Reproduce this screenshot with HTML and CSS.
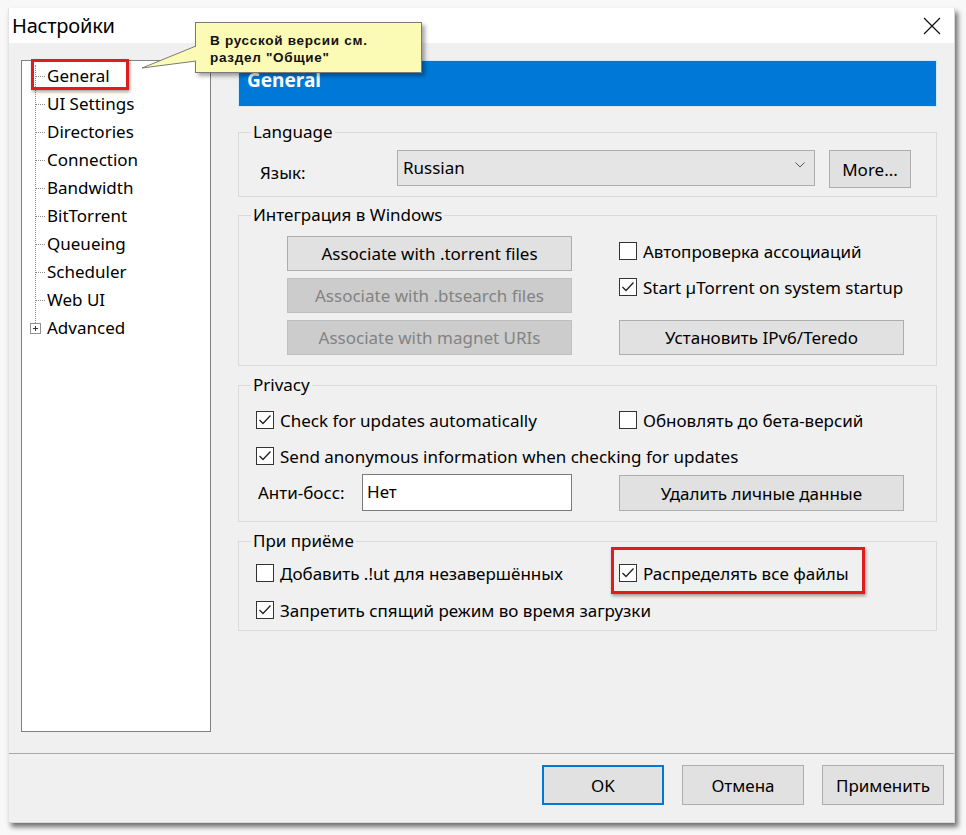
FILE: index.html
```html
<!DOCTYPE html>
<html lang="ru">
<head>
<meta charset="utf-8">
<title>Настройки</title>
<link rel="stylesheet" href="styles.css">
</head>
<body>
<div class="window">
  <div class="titlebar">
    <span class="title">Настройки</span>
    <svg class="close" width="18" height="18" viewBox="0 0 18 18"><path d="M1 1 L17 17 M17 1 L1 17" stroke="#111" stroke-width="1.2" fill="none"/></svg>
  </div>
  <div class="main">
    <div class="tree">
      <ul class="tree-list">
        <li>General</li>
        <li>UI Settings</li>
        <li>Directories</li>
        <li>Connection</li>
        <li>Bandwidth</li>
        <li>BitTorrent</li>
        <li>Queueing</li>
        <li>Scheduler</li>
        <li>Web UI</li>
        <li class="has-children"><span class="expander"><svg width="11" height="11" viewBox="0 0 11 11"><rect x="0.5" y="0.5" width="10" height="10" fill="#fff" stroke="#919191"/><path d="M3 5.5 H8 M5.5 3 V8" stroke="#333" stroke-width="1"/></svg></span>Advanced</li>
      </ul>
    </div>
    <div class="panel">
      <div class="header">General</div>

      <fieldset class="group g-lang">
        <legend>Language</legend>
        <div class="lang-row">
          <span class="lang-label">Язык:</span>
          <div class="combo"><span>Russian</span><svg width="10" height="6" viewBox="0 0 10 6"><polyline points="0.5,0.5 5,5 9.5,0.5" stroke="#555" stroke-width="1" fill="none"/></svg></div>
          <button class="btn btn-more">More...</button>
        </div>
      </fieldset>

      <fieldset class="group g-int">
        <legend>Интеграция в Windows</legend>
        <div class="int-grid">
          <div class="int-left">
            <button class="btn btn-wide">Associate with .torrent files</button>
            <button class="btn btn-wide disabled">Associate with .btsearch files</button>
            <button class="btn btn-wide disabled">Associate with magnet URIs</button>
          </div>
          <div class="int-right">
            <label class="check"><span class="cb"></span>Автопроверка ассоциаций</label>
            <label class="check check-2"><span class="cb on"><svg width="16" height="16" viewBox="0 0 16 16"><polyline points="2.5,8 6,11.5 13.5,3.5" stroke="#222" stroke-width="1.3" fill="none"/></svg></span>Start µTorrent on system startup</label>
            <button class="btn btn-wide btn-ipv6">Установить IPv6/Teredo</button>
          </div>
        </div>
      </fieldset>

      <fieldset class="group g-priv">
        <legend>Privacy</legend>
        <div class="two-col row-first">
          <label class="check"><span class="cb on"><svg width="16" height="16" viewBox="0 0 16 16"><polyline points="2.5,8 6,11.5 13.5,3.5" stroke="#222" stroke-width="1.3" fill="none"/></svg></span>Check for updates automatically</label>
          <label class="check"><span class="cb"></span>Обновлять до бета-версий</label>
        </div>
        <div class="two-col row-next">
          <label class="check"><span class="cb on"><svg width="16" height="16" viewBox="0 0 16 16"><polyline points="2.5,8 6,11.5 13.5,3.5" stroke="#222" stroke-width="1.3" fill="none"/></svg></span>Send anonymous information when checking for updates</label>
        </div>
        <div class="boss-row">
          <span class="boss-label">Анти-босс:</span>
          <div class="input">Нет</div>
          <button class="btn btn-wide btn-clear">Удалить личные данные</button>
        </div>
      </fieldset>

      <fieldset class="group g-recv">
        <legend>При приёме</legend>
        <div class="two-col row-first-r">
          <label class="check"><span class="cb"></span>Добавить .!ut для незавершённых</label>
          <label class="check"><span class="cb on"><svg width="16" height="16" viewBox="0 0 16 16"><polyline points="2.5,8 6,11.5 13.5,3.5" stroke="#222" stroke-width="1.3" fill="none"/></svg></span>Распределять все файлы</label>
        </div>
        <div class="two-col row-next-r">
          <label class="check"><span class="cb on"><svg width="16" height="16" viewBox="0 0 16 16"><polyline points="2.5,8 6,11.5 13.5,3.5" stroke="#222" stroke-width="1.3" fill="none"/></svg></span>Запретить спящий режим во время загрузки</label>
        </div>
      </fieldset>
    </div>
  </div>
  <div class="footer">
    <button class="btn btn-foot btn-ok">OK</button>
    <button class="btn btn-foot">Отмена</button>
    <button class="btn btn-foot">Применить</button>
  </div>

  <div class="mark mark-general"></div>
  <div class="mark mark-alloc"></div>
  <div class="callout">В русской версии см.<br>раздел "Общие"</div>
  <svg class="callout-tail" width="62" height="36" viewBox="0 0 62 36"><polygon points="59,8 4,30 59,23" fill="#fbfbb6"/><polyline points="58,8 4,30 58,23" stroke="#7a7a7a" stroke-width="1" fill="none"/></svg>
</div>
</body>
</html>
```
FILE: styles.css
```css
* { box-sizing: border-box; }
html, body { margin: 0; padding: 0; }
body {
  background: #f8f8f8;
  font-family: "Noto Sans", "Open Sans", sans-serif;
  font-size: 17px;
  color: #000;
  width: 966px;
  height: 835px;
  overflow: hidden;
}
.window {
  position: relative;
  margin: 8px 0 0 8px;
  width: 947px;
  height: 815px;
  background: #f0f0f0;
  box-shadow: 3px 4px 5px rgba(0,0,0,0.55);
  border: 1px solid #d8d8d8;
  border-top: none;
  border-left-color: #e4e4e4;
}
.titlebar {
  height: 35px;
  background: #fff;
  display: flex;
  align-items: center;
  justify-content: space-between;
  padding: 0 13px 0 3px;
}
.title { font-size: 20px; line-height: 26px; margin-top: 1px; letter-spacing: -0.2px; }
.close { display: block; margin-top: 0; }

.main {
  height: 710px;
  display: flex;
  padding: 17px 0 0 12px;
  gap: 27px;
}
.tree {
  width: 190px;
  height: 672px;
  background: #fff;
  border: 1px solid #828282;
}
.tree-list {
  list-style: none;
  margin: 0;
  padding: 1px 0 0 0;
  position: relative;
}
.tree-list::before {
  content: "";
  position: absolute;
  left: 13px;
  top: 4px;
  height: 258px;
  border-left: 1px dotted #8a8a8a;
}
.tree-list li {
  position: relative;
  height: 28px;
  line-height: 28px;
  padding-left: 25px;
  white-space: nowrap;
}
.tree-list li::before {
  content: "";
  position: absolute;
  left: 14px;
  top: 14px;
  width: 9px;
  border-top: 1px dotted #8a8a8a;
}
.tree-list li.has-children::before { display: none; }
.expander {
  position: absolute;
  left: 8px;
  top: 9px;
  width: 11px;
  height: 11px;
  line-height: 0;
}

.panel { width: 699px; }
.header {
  height: 47px;
  background: #0078d7;
  border: 1px solid #d5e8f8;
  color: #fff;
  font-weight: bold;
  font-size: 19px;
  line-height: 24px;
  padding: 7px 0 0 8px;
}

.group {
  margin: 0;
  border: 1px solid #dadada;
  padding: 0 12px;
  min-width: 0;
}
.group legend {
  padding: 0 2px;
  line-height: 22px;
  font-size: 17px;
}
.g-lang { margin-top: 14px; }
.g-int { margin-top: 7px; }
.g-priv { margin-top: 8px; }
.g-recv { margin-top: 8px; }

.btn {
  font-family: inherit;
  font-size: 17px;
  color: #000;
  background: #e1e1e1;
  border: 1px solid #adadad;
  padding: 0;
  margin: 0;
  display: flex;
  align-items: center;
  justify-content: center;
}
.btn.disabled {
  background: #cccccc;
  border-color: #bfbfbf;
  color: #838383;
}

.lang-row {
  display: flex;
  align-items: flex-start;
  padding: 7px 0 8px 9px;
}
.lang-label { width: 137px; line-height: 22px; margin-top: 12px; }
.combo {
  width: 418px;
  height: 36px;
  background: #e5e5e5;
  border: 1px solid #adadad;
  display: flex;
  align-items: center;
  justify-content: space-between;
  padding: 0 9px 0 5px;
}
.combo span { margin-top: -2px; }
.combo svg { display: block; margin-top: -6px; }
.btn-more { width: 82px; height: 38px; margin-left: 14px; }

.int-grid {
  display: flex;
  gap: 47px;
  padding: 10px 0 10px 36px;
}
.int-left {
  display: flex;
  flex-direction: column;
  gap: 7px;
}
.btn-wide { width: 285px; height: 35px; }
.int-right { display: flex; flex-direction: column; }
.check {
  display: flex;
  align-items: center;
  height: 30px;
  white-space: nowrap;
}
.check-2 { margin-top: 6px; }
.btn-ipv6 { margin-top: 18px; }
.cb {
  width: 18px;
  height: 18px;
  border: 1px solid #333;
  background: #fff;
  margin-right: 6px;
  flex: none;
  display: flex;
  align-items: center;
  justify-content: center;
}
.cb svg { display: block; }

.two-col {
  display: grid;
  grid-template-columns: 363px 1fr;
  margin-left: 5px;
}
.row-first { margin-top: 9px; }
.row-next { margin-top: 6px; }
.boss-row {
  display: flex;
  align-items: center;
  height: 37px;
  margin: 3px 0 10px 7px;
}
.boss-label { width: 104px; }
.input {
  width: 210px;
  height: 37px;
  background: #fff;
  border: 1px solid #7a7a7a;
  padding-left: 4px;
  line-height: 33px;
}
.btn-clear { height: 36px; margin-left: 47px; margin-top: 1px; }

.row-first-r { margin-top: 6px; }
.row-next-r { margin-top: 7px; margin-bottom: 5px; }

.footer {
  border-top: 1px solid #a8a8a8;
  display: flex;
  justify-content: flex-end;
  gap: 18px;
  padding: 11px 10px 0 0;
}
.btn-foot { width: 122px; height: 40px; }
.btn-ok { border: 2px solid #0078d7; }

.mark {
  position: absolute;
  border: 3px solid #e31b1b;
  box-shadow: 1px 2px 3px rgba(0,0,0,0.35);
}
.mark-general { left: 22px; top: 51px; width: 98px; height: 31px; }
.mark-alloc { left: 602px; top: 539px; width: 254px; height: 47px; }

.callout {
  position: absolute;
  left: 186px;
  top: 14px;
  width: 227px;
  height: 51px;
  background: #fbfbb6;
  border: 1px solid #7a7a7a;
  box-shadow: 3px 3px 4px rgba(0,0,0,0.35);
  font-family: "Liberation Sans", Arial, sans-serif;
  font-weight: bold;
  font-size: 13.5px;
  line-height: 17px;
  letter-spacing: 0.7px;
  padding: 9px 0 0 14px;
  color: #111;
}
.callout-tail {
  position: absolute;
  left: 129px;
  top: 30px;
}
```
